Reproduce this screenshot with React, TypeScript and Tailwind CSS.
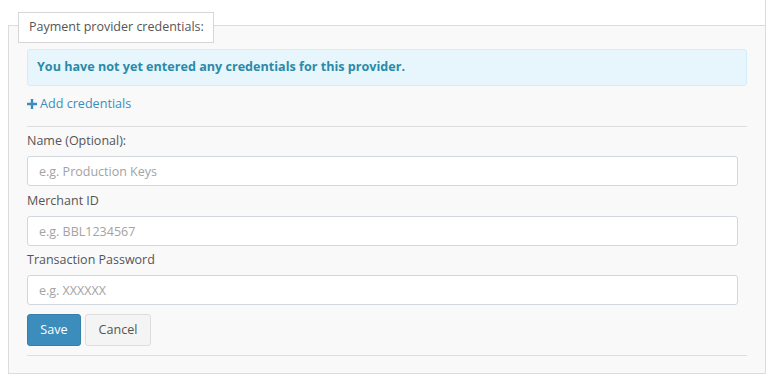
import React from "react";

export default function App() {
  const font = { fontFamily: '"Open Sans", "Liberation Sans", sans-serif' };
  return (
    <div className="w-[768px] h-[379px] bg-white overflow-hidden" style={font}>
      <div className="relative w-[766px] h-[374px] pl-2 pt-[25px] border-r border-[#dcdcdc]">
        <div className="absolute left-[18px] top-[12px] w-[196px] h-[31px] bg-white border border-[#d6d6d6] flex items-center pl-[10px] text-[12.5px] text-[#555] z-10">
          Payment provider credentials:
        </div>
        <div className="h-[349px] border-t border-l border-b border-[#dcdcdc] bg-[#f9f9f9] pl-[18px] pr-[18px] pt-[23px]">
          <div className="h-[37px] rounded-[3px] border border-[#d3eef8] bg-[#e6f6fc] flex items-center pl-[9px] text-[12.6px] font-bold text-[#2b8aa8]">
            You have not yet entered any credentials for this provider.
          </div>
          <div className="mt-[9px] h-[18px] flex items-center text-[12.6px] text-[#3c8dbc]">
            <svg width="10" height="10" viewBox="0 0 10 10" className="mr-[3px]">
              <path d="M3.8 0h2.4v3.8H10v2.4H6.2V10H3.8V6.2H0V3.8h3.8z" fill="#3c8dbc" />
            </svg>
            Add credentials
          </div>
          <div className="mt-[13px] border-t border-[#dedede]" />
          <div className="mt-[5px] h-[18px] leading-[18px] text-[12.5px] text-[#555]">Name (Optional):</div>
          <input
            className="mt-[6px] block w-[711px] h-[30px] bg-white border border-[#d2d6de] rounded-[3px] px-[11px] text-[12.5px] text-[#555] placeholder:text-[#a3a3a3] outline-none"
            placeholder="e.g. Production Keys"
            style={font}
          />
          <div className="mt-[6px] h-[18px] leading-[18px] text-[12.5px] text-[#555]">Merchant ID</div>
          <input
            className="mt-[6px] block w-[711px] h-[30px] bg-white border border-[#d2d6de] rounded-[3px] px-[11px] text-[12.5px] text-[#555] placeholder:text-[#a3a3a3] outline-none"
            placeholder="e.g. BBL1234567"
            style={font}
          />
          <div className="mt-[5px] h-[18px] leading-[18px] text-[12.5px] text-[#555]">Transaction Password</div>
          <input
            className="mt-[6px] block w-[711px] h-[30px] bg-white border border-[#d2d6de] rounded-[3px] px-[11px] text-[12.5px] text-[#555] placeholder:text-[#a3a3a3] outline-none"
            placeholder="e.g. XXXXXX"
            style={font}
          />
          <div className="mt-[9px] flex gap-[4px]">
            <button className="w-[54px] h-[32px] rounded-[3px] bg-[#3c8dbc] border border-[#367fa9] text-white text-[12.6px]" style={font}>
              Save
            </button>
            <button className="w-[66px] h-[32px] rounded-[3px] bg-[#f4f4f4] border border-[#dddddd] text-[#555] text-[12.6px]" style={font}>
              Cancel
            </button>
          </div>
          <div className="mt-[9px] border-t border-[#dedede]" />
        </div>
      </div>
    </div>
  );
}
